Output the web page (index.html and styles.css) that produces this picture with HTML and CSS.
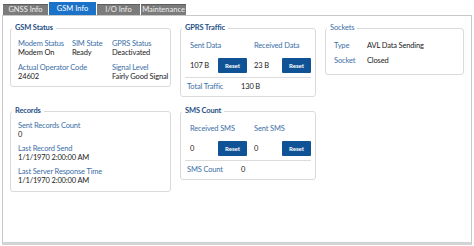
FILE: index.html
```html
<!DOCTYPE html>
<html>
<head>
<meta charset="utf-8">
<link rel="stylesheet" href="styles.css">
</head>
<body>
<div class="tabs">
  <div class="tab">GNSS Info</div>
  <div class="tab active">GSM Info</div>
  <div class="tab">I/O Info</div>
  <div class="tab">Maintenance</div>
</div>
<div class="panel">
  <div class="grid">
    <fieldset class="box">
      <legend class="title">GSM Status</legend>
      <div class="gsm">
        <div class="pair"><div class="lbl">Modem Status</div><div class="val">Modem On</div></div>
        <div class="pair"><div class="lbl">SIM State</div><div class="val">Ready</div></div>
        <div class="pair"><div class="lbl">GPRS Status</div><div class="val">Deactivated</div></div>
        <div class="pair span2"><div class="lbl">Actual Operator Code</div><div class="val">24602</div></div>
        <div class="pair"><div class="lbl">Signal Level</div><div class="val">Fairly Good Signal</div></div>
      </div>
    </fieldset>

    <fieldset class="box counter">
      <legend class="title">GPRS Traffic</legend>
      <div class="cgrid">
        <div class="cell">
          <div class="lbl">Sent Data</div>
          <div class="crow"><span class="cval">107 B</span><button class="btn">Reset</button></div>
        </div>
        <div class="cell">
          <div class="lbl">Received Data</div>
          <div class="crow"><span class="cval">23 B</span><button class="btn">Reset</button></div>
        </div>
      </div>
      <div class="total"><span class="lbl tl">Total Traffic</span><span class="val">130 B</span></div>
    </fieldset>

    <fieldset class="box">
      <legend class="title plain">Sockets</legend>
      <div class="sockets">
        <div class="lbl">Type</div><div class="val">AVL Data Sending</div>
        <div class="lbl">Socket</div><div class="val">Closed</div>
      </div>
    </fieldset>

    <fieldset class="box">
      <legend class="title">Records</legend>
      <div class="records">
        <div class="pair"><div class="lbl">Sent Records Count</div><div class="val">0</div></div>
        <div class="pair"><div class="lbl">Last Record Send</div><div class="val">1/1/1970 2:00:00 AM</div></div>
        <div class="pair"><div class="lbl">Last Server Response Time</div><div class="val">1/1/1970 2:00:00 AM</div></div>
      </div>
    </fieldset>

    <fieldset class="box counter">
      <legend class="title">SMS Count</legend>
      <div class="cgrid">
        <div class="cell">
          <div class="lbl">Received SMS</div>
          <div class="crow"><span class="cval">0</span><button class="btn">Reset</button></div>
        </div>
        <div class="cell">
          <div class="lbl">Sent SMS</div>
          <div class="crow"><span class="cval">0</span><button class="btn">Reset</button></div>
        </div>
      </div>
      <div class="total"><span class="lbl tl">SMS Count</span><span class="val">0</span></div>
    </fieldset>
  </div>
</div>
</body>
</html>
```

FILE: styles.css
```css
* { box-sizing: border-box; }
html, body { margin: 0; padding: 0; background: #fff; }
body {
  width: 474px;
  height: 246px;
  font-family: "Lato", "Liberation Sans", sans-serif;
  font-size: 7.5px;
  letter-spacing: -0.15px;
  color: #222;
  overflow: hidden;
}
.tabs {
  display: flex;
  align-items: flex-end;
  gap: 1px;
  height: 15px;
  padding-left: 3px;
}
.tab {
  height: 11px;
  line-height: 10px;
  text-align: center;
  background: #7b7b7b;
  border-top: 1px solid #5e5e5e;
  color: #eee;
  font-size: 7.5px;
  letter-spacing: 0;
}
.tab:nth-child(1) { width: 45px; }
.tab:nth-child(2) { width: 47px; }
.tab:nth-child(3) { width: 43px; }
.tab:nth-child(4) { width: 45px; }
.tab.active {
  height: 13px;
  line-height: 12px;
  background: #1b73c9;
  border-top-color: #1b73c9;
  color: #fff;
}
.panel {
  margin: 0 2px;
  height: 230px;
  border: 1px solid #c9c9c9;
  border-bottom: 3px solid #d3d3d3;
}
.grid {
  display: grid;
  grid-template-columns: 161px 136px 139px;
  column-gap: 9px;
  row-gap: 9px;
  align-items: start;
  padding: 7px 0 0 7px;
}
.box {
  margin: 0;
  padding: 0 7px 5px 7px;
  border: 1px solid #dadada;
  border-radius: 3px;
  min-width: 0;
}
.title {
  margin-left: -6px;
  padding: 0 3px;
  line-height: 10px;
  font-weight: bold;
  color: #1f4f85;
}
.title.plain { font-weight: normal; color: #3c6fa8; }
.lbl { color: #3c6fa8; line-height: 9px; white-space: nowrap; }
.val { color: #222; line-height: 9px; white-space: nowrap; }

.gsm {
  display: grid;
  grid-template-columns: 54px 40px 1fr;
  row-gap: 6px;
  padding-top: 6px;
}
.span2 { grid-column: 1 / 3; }

.counter { padding: 0 4px 5px 4px; }
.counter .title { margin-left: -3px; }
.cgrid {
  display: grid;
  grid-template-columns: 64px 64px;
  padding-top: 8px;
}
.cell { padding-left: 5px; }
.crow {
  display: flex;
  align-items: center;
  margin-top: 8px;
  height: 15px;
}
.cval { width: 28px; }
.btn {
  width: 29px;
  height: 15px;
  padding: 0;
  border: none;
  border-radius: 1px;
  background: #0f5296;
  color: #fff;
  font-family: "Lato", "Liberation Sans", sans-serif;
  font-size: 6px;
  font-weight: bold;
  letter-spacing: 0;
}
.total {
  display: flex;
  margin-top: 4px;
  padding: 4px 0 0 2px;
  border-top: 1px solid #dcdcdc;
}
.tl { width: 54px; }

.sockets {
  display: grid;
  grid-template-columns: 33px 1fr;
  row-gap: 6px;
  padding: 8px 0 4px 1px;
}

.records {
  display: flex;
  flex-direction: column;
  gap: 5px;
  padding-top: 5px;
  padding-bottom: 1px;
}
```
